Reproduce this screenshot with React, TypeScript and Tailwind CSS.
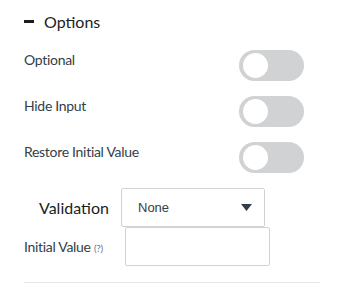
import React from "react";

function Toggle() {
  return (
    <div className="relative w-[65px] h-[31px] rounded-full bg-[#d0d2d3]">
      <div className="absolute left-[4px] top-[3px] w-[25px] h-[25px] rounded-full bg-white" />
    </div>
  );
}

export default function App() {
  const font = { fontFamily: "Lato, 'Open Sans', sans-serif" };
  return (
    <div className="w-[344px] h-[306px] bg-white px-6" style={font}>
      <div className="flex items-center h-[42px] pt-[1px]">
        <div className="w-[10px] h-[3px] bg-[#1c1c1c]" />
        <span className="ml-[10px] text-[16px] text-[#1c1c1c]">Options</span>
      </div>
      <div className="flex flex-col">
        {["Optional", "Hide Input", "Restore Initial Value"].map((l) => (
          <div key={l} className="flex items-center justify-between h-[46px] pr-4">
            <span className="text-[14px] tracking-[-0.3px] text-[#333e48] -mt-[11px]">{l}</span>
            <Toggle />
          </div>
        ))}
      </div>
      <div className="flex items-center mt-[8px]">
        <span className="w-[97px] pl-[15px] text-[16px] text-[#1c1c1c]">Validation</span>
        <div className="flex items-center justify-between w-[144px] h-[39px] border border-[#d0d2d3] rounded-[2px] pl-[16px] pr-[12px]">
          <span className="text-[13px] text-[#333e48]" style={{ fontFamily: "'Liberation Sans', Arial, sans-serif" }}>None</span>
          <svg width="11" height="7" viewBox="0 0 11 7"><path d="M0 0 H11 L5.5 7 Z" fill="#333e48" /></svg>
        </div>
      </div>
      <div className="flex items-center">
        <span className="w-[101px] text-[14px] tracking-[-0.3px] text-[#333e48]">
          Initial Value <span className="text-[10px] text-[#6b7787]">(?)</span>
        </span>
        <div className="w-[145px] h-[39px] border border-[#d0d2d3] rounded-[2px]" />
      </div>
      <div className="mt-[16px] h-px bg-[#e6e6e6]" />
    </div>
  );
}
